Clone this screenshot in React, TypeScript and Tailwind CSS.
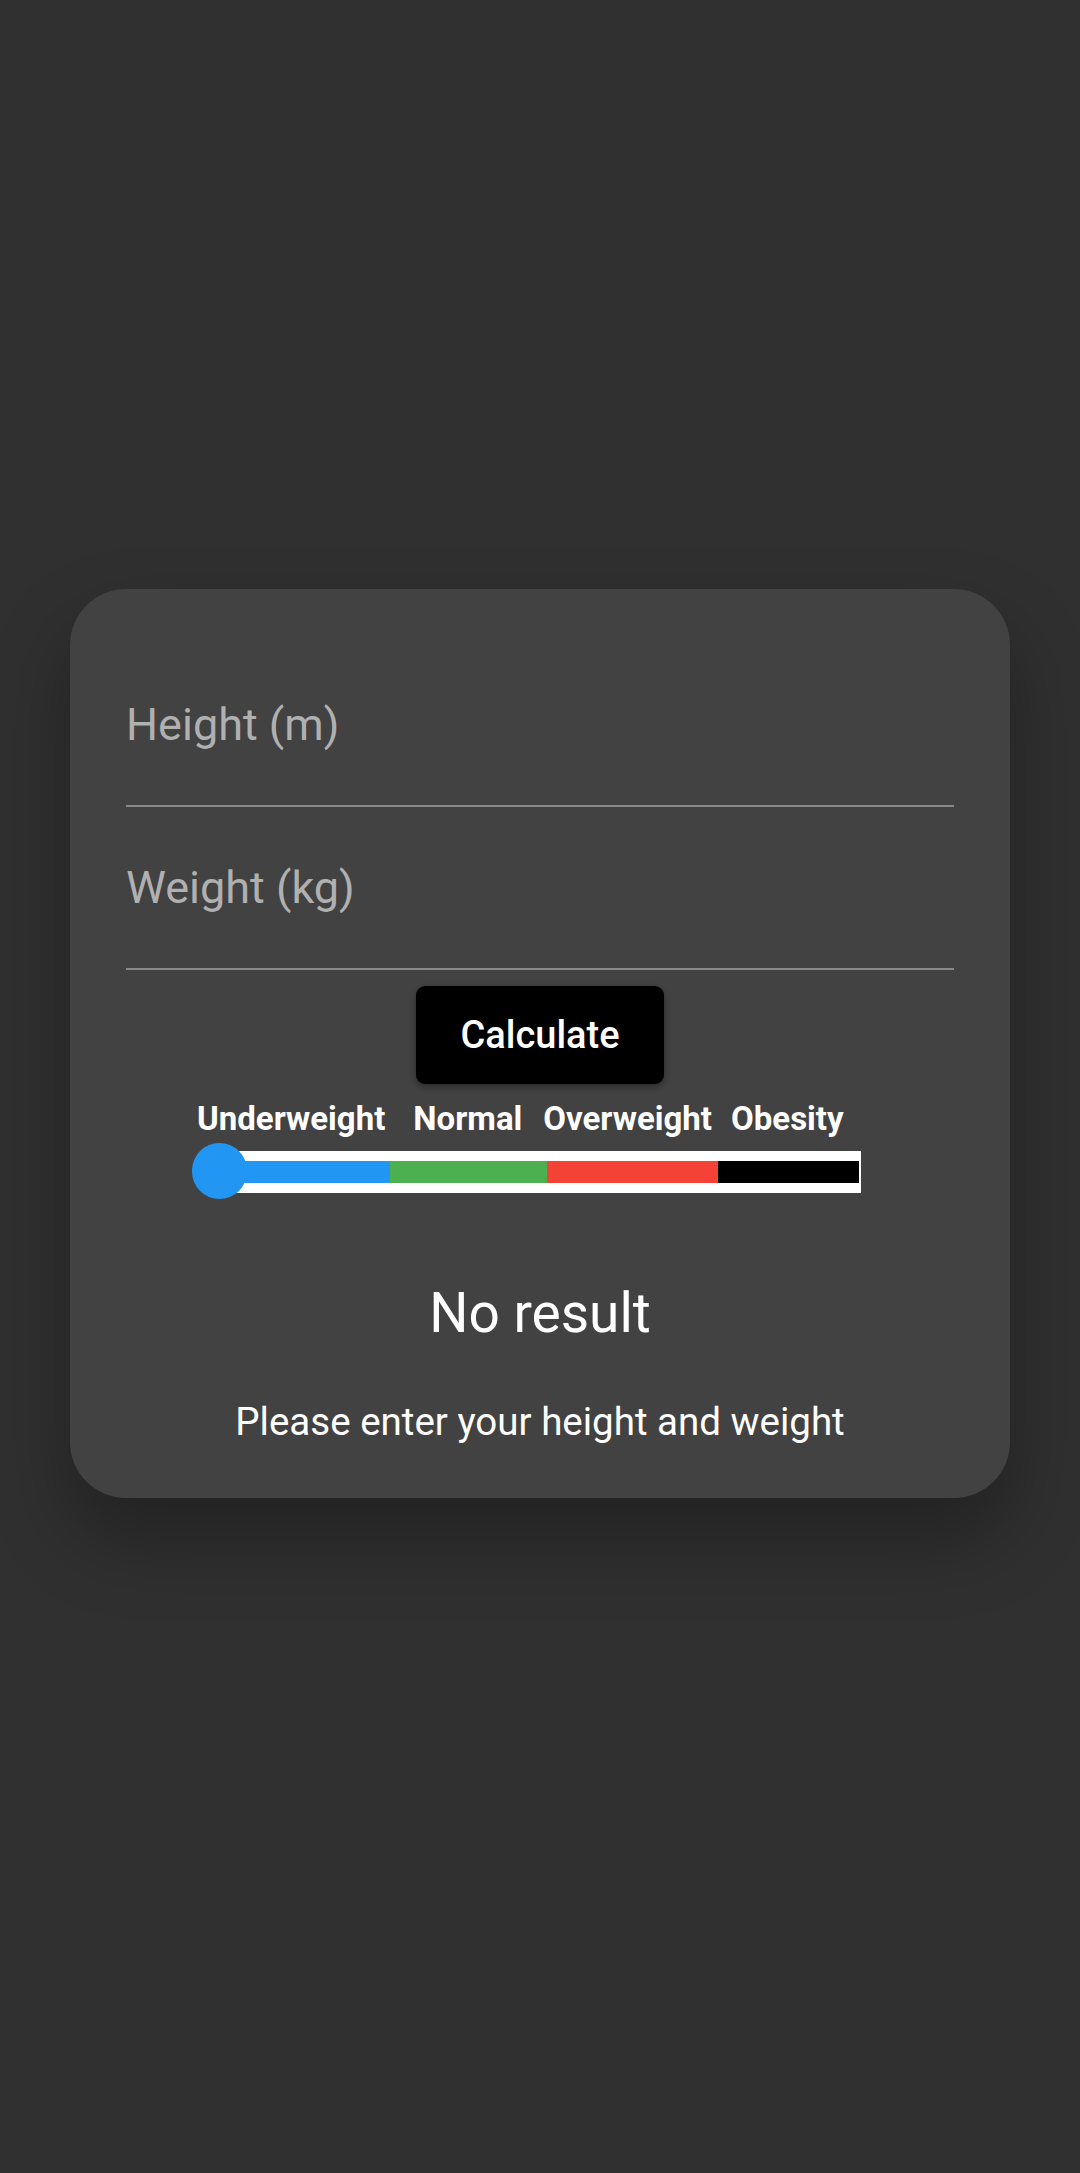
const segments = [
  { label: "Underweight", color: "bg-[#2196f3]", width: "w-[187px]" },
  { label: "Normal", color: "bg-[#4caf50]", width: "w-[157px]" },
  { label: "Overweight", color: "bg-[#f44336]", width: "w-[171px]" },
  { label: "Obesity", color: "bg-black", width: "w-[141px]" },
];

function Field({ label }: { label: string }) {
  return (
    <div className="border-b-2 border-[#8a8a8a] pt-[54px] pb-[53px]">
      <div className="text-[45px] leading-[54px] text-[#b0b0b0]">{label}</div>
    </div>
  );
}

function BmiScale() {
  return (
    <div className="ml-[65px] w-[670px]">
      <div className="mt-[17px] flex text-[33px] font-bold leading-[36px] text-white">
        <span className="ml-[6px]">Underweight</span>
        <span className="ml-[28px]">Normal</span>
        <span className="ml-[21px]">Overweight</span>
        <span className="ml-[19px]">Obesity</span>
      </div>
      <div className="relative mt-[14px]">
        <div className="ml-[12px] flex bg-white py-[10px] pr-[2px]">
          {segments.map((s) => (
            <div key={s.label} className={`h-[22px] ${s.color} ${s.width}`} />
          ))}
        </div>
        <div className="absolute left-[1px] top-[-8px] h-[56px] w-[55px] rounded-full bg-[#2196f3]" />
      </div>
    </div>
  );
}

export default function App() {
  return (
    <div
      className="min-h-screen bg-[#303030] pt-[589px]"
      style={{ fontFamily: "Roboto, 'Noto Sans', sans-serif" }}
    >
      <div className="ml-[70px] w-[940px] rounded-[56px] bg-[#424242] px-[56px] pt-[55px] pb-[55px] shadow-[0_40px_80px_rgba(0,0,0,0.3)]">
        <Field label="Height (m)" />
        <Field label="Weight (kg)" />
        <div className="mt-[16px] flex justify-center">
          <button
            type="button"
            className="h-[98px] w-[248px] rounded-[9px] bg-black text-[38px] font-medium text-white shadow-[0_3px_6px_rgba(0,0,0,0.35)]"
          >
            Calculate
          </button>
        </div>
        <BmiScale />
        <div className="mt-[87px] text-center text-[55px] leading-[67px] text-white">No result</div>
        <div className="mt-[53px] text-center text-[38.5px] leading-[43px] text-white">
          Please enter your height and weight
        </div>
      </div>
    </div>
  );
}
